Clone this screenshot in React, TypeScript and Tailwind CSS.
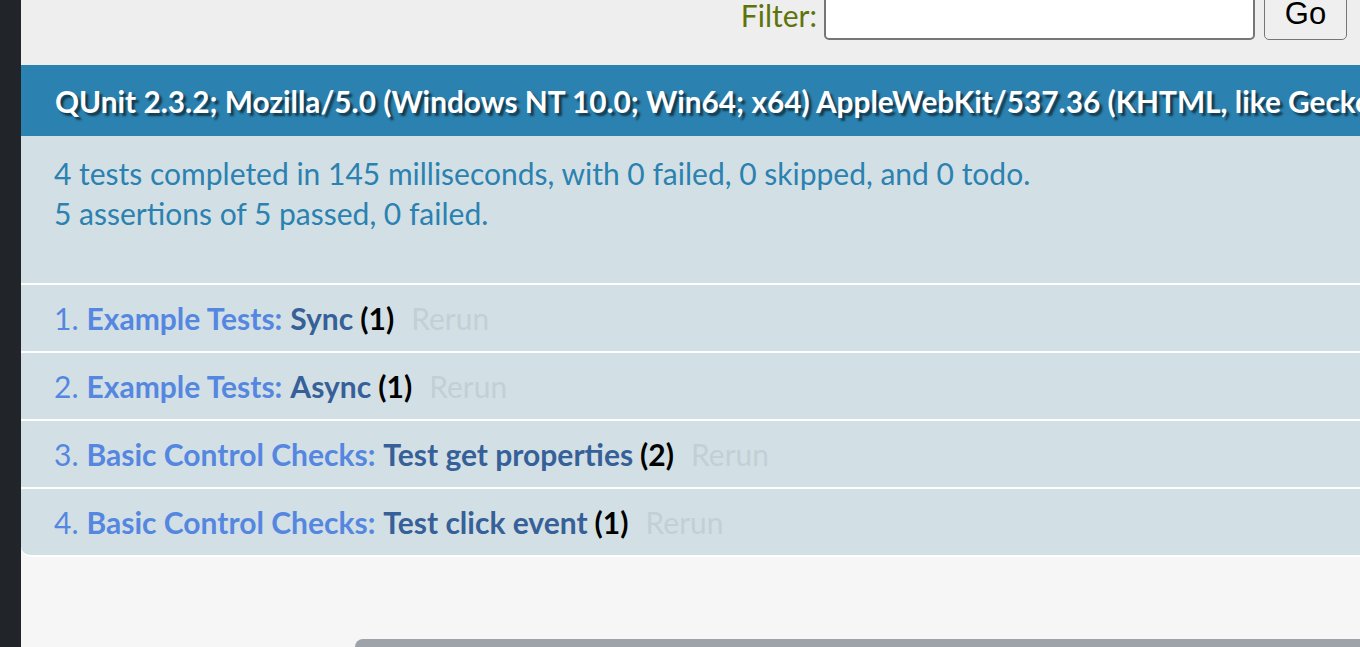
import React from "react";

const tests = [
  { mod: "Example Tests:", name: "Sync", count: 1 },
  { mod: "Example Tests:", name: "Async", count: 1 },
  { mod: "Basic Control Checks:", name: "Test get properties", count: 2 },
  { mod: "Basic Control Checks:", name: "Test click event", count: 1 },
];

export default function App() {
  return (
    <div className="flex h-[647px] w-[1360px] overflow-hidden bg-[#f6f6f6] font-['Lato',sans-serif]">
      <div className="w-[21px] shrink-0 bg-[#212529]" />
      <div className="flex min-w-0 flex-1 flex-col">
        <div className="flex h-[65px] shrink-0 items-start justify-end bg-[#eeeeee] pr-[13px]">
          <span className="text-[30px] leading-[30px] text-[#5e740b]">Filter:</span>
          <div className="ml-[7px] mt-[-6px] h-[46px] w-[431px] rounded-[5px] border-2 border-[#767676] bg-white" />
          <div className="ml-[9px] mt-[-6px] flex h-[46px] w-[83px] items-end justify-center rounded-[5px] border border-[#767676] bg-[#efefef] pb-[10px] font-['Liberation_Sans',sans-serif] text-[31px] leading-[30px] text-black">
            Go
          </div>
        </div>
        <div className="w-[1500px]">
          <div className="flex h-[71px] items-center overflow-hidden bg-[#2b81af] pl-[34px] pt-[3px]">
            <span className="whitespace-nowrap text-[29.8px] font-bold text-white [text-shadow:3px_3px_2px_rgba(0,0,0,0.55)]">
              QUnit 2.3.2; Mozilla/5.0 (Windows NT 10.0; Win64; x64) AppleWebKit/537.36 (KHTML, like Gecko)
            </span>
          </div>
          <div className="h-[147px] bg-[#d2e0e6] pl-[33px] pt-[17px] text-[30px] leading-[40px] text-[#2b81af]">
            <div>4 tests completed in 145 milliseconds, with 0 failed, 0 skipped, and 0 todo.</div>
            <div>5 assertions of 5 passed, 0 failed.</div>
          </div>
          <ol>
            {tests.map((t, i) => (
              <li
                key={i}
                className={
                  "flex items-center border-t-2 border-white bg-[#d2e0e6] pl-[33px] text-[30px] whitespace-nowrap " +
                  (i === tests.length - 1 ? "h-[70px] rounded-bl-[10px] border-b-2" : "h-[68px]")
                }
              >
                <span className="text-[#5587e0]">{i + 1}.</span>
                <span className="ml-[8px] font-bold text-[#5587e0]">{t.mod}</span>
                <span className="ml-[8px] font-bold text-[#366097]">{t.name}</span>
                <span className="ml-[7px] font-bold text-black">({t.count})</span>
                <span className="ml-[17px] text-[#c4cfd5]">Rerun</span>
              </li>
            ))}
          </ol>
        </div>
        <div className="flex-1" />
        <div className="ml-[334px] h-[8px] shrink-0 rounded-tl-[24px] bg-[#9ea3aa]" />
      </div>
    </div>
  );
}
